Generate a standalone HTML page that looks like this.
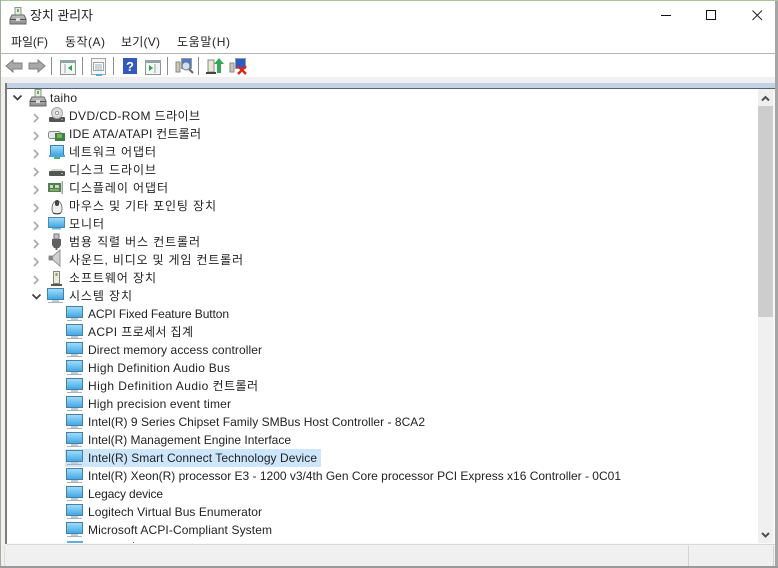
<!DOCTYPE html>
<html><head><meta charset="utf-8"><style>
html,body{margin:0;padding:0;background:#fff;overflow:hidden}
svg{display:block;filter:blur(.25px)}
text{font-family:"Liberation Sans","Noto Sans CJK KR",sans-serif;font-size:12px;fill:#222}
</style></head><body>
<svg width="778" height="568" viewBox="0 0 778 568" xmlns="http://www.w3.org/2000/svg">
<defs>
<linearGradient id="scr" x1="0" y1="0" x2="0" y2="1"><stop offset="0" stop-color="#a2def8"/><stop offset="1" stop-color="#3fa6e6"/></linearGradient>
<linearGradient id="gr" x1="0" y1="0" x2="0" y2="1"><stop offset="0" stop-color="#c4c4c4"/><stop offset="1" stop-color="#8c8c8c"/></linearGradient>
<symbol id="mon" overflow="visible">
<rect x="0.5" y="0.5" width="16" height="11" fill="url(#scr)" stroke="#4a7fa5"/>
<rect x="5" y="12" width="7" height="2" fill="#c2ccd4"/>
<rect x="1" y="14" width="15" height="1" fill="#a6b3bd"/>
</symbol>
<symbol id="pc" overflow="visible">
<rect x="6" y="0.5" width="6" height="8" fill="#e6ecdf" stroke="#8a9985"/><rect x="8" y="2" width="2" height="3" fill="#6fae62"/>
<path d="M3 8h12l2 4v5H1v-5z" fill="url(#gr)" stroke="#666"/><rect x="1" y="12" width="16" height="1" fill="#555"/><rect x="7" y="11" width="4" height="3" fill="#ddd"/>
</symbol>
</defs>

<!-- window frame -->
<rect width="778" height="568" fill="#f0f0f0"/>
<rect x="0" y="0" width="778" height="1" fill="#a9c49a"/>
<rect x="1" y="1" width="776" height="52" fill="#fff"/>
<rect x="1" y="53" width="776" height="1" fill="#b4b4b4"/>
<rect x="1" y="54" width="776" height="23" fill="#fff"/>
<rect x="1" y="77" width="776" height="6" fill="#f0f0f0"/>
<rect x="6" y="83" width="769" height="5" fill="#c0d2e4"/>
<rect x="6" y="88" width="769" height="1" fill="#5c6066"/>
<rect x="0" y="0" width="1" height="568" fill="#a3ab9a"/>
<rect x="775" y="1" width="3" height="567" fill="#a6a6a6"/>
<rect x="0" y="566" width="778" height="2" fill="#9a9a9a"/>

<!-- tree pane -->
<rect x="5" y="83" width="2" height="461" fill="#7d7d7d"/>
<rect x="7" y="89" width="751" height="454" fill="#fff"/>
<rect x="7" y="543" width="768" height="1" fill="#fafafa"/>
<rect x="7" y="544" width="768" height="1" fill="#d8d8d8"/>

<!-- scrollbar -->
<rect x="758" y="89" width="15" height="454" fill="#f0f0f0"/>
<rect x="773" y="89" width="2" height="454" fill="#f8f8f8"/>
<rect x="758" y="106" width="15" height="211" fill="#cdcdcd"/>
<path d="M762 100.5l3.5-3.5 3.5 3.5" fill="none" stroke="#505050" stroke-width="2"/>
<path d="M762 533l3.5 3.5 3.5-3.5" fill="none" stroke="#505050" stroke-width="2"/>

<!-- status bar -->
<rect x="688" y="546" width="1" height="20" fill="#d4d4d4"/>
<rect x="773" y="546" width="1" height="20" fill="#d4d4d4"/>
<rect x="4" y="546" width="1" height="20" fill="#dcdcdc"/>

<!-- title bar -->
<use href="#pc" x="9" y="7"/>
<text x="30" y="20" textLength="63" lengthAdjust="spacing" style="font-size:13px">장치 관리자</text>
<rect x="661" y="15" width="10" height="1" fill="#111"/>
<rect x="706.5" y="10.5" width="9" height="9" fill="none" stroke="#111"/>
<path d="M752.5 10.5l9.5 9.5M762 10.5l-9.5 9.5" stroke="#222" fill="none"/>

<!-- menu -->
<text x="11" y="46" textLength="37" lengthAdjust="spacing">파일(F)</text>
<text x="65" y="46" textLength="40" lengthAdjust="spacing">동작(A)</text>
<text x="121" y="46" textLength="39" lengthAdjust="spacing">보기(V)</text>
<text x="177" y="46" textLength="53" lengthAdjust="spacing">도움말(H)</text>

<!-- toolbar -->
<g stroke="#8c8c8c" fill="none">
<path d="M51.5 57v18M82.5 57v18M113.5 57v18M167.5 57v18M198.5 57v18"/>
</g>
<path d="M6 66l7-6v3h9v6h-9v3z" fill="#a8a8a8" stroke="#808080"/>
<path d="M45 66l-7-6v3h-9v6h9v3z" fill="#a8a8a8" stroke="#808080"/>
<g>
<rect x="60.5" y="60.5" width="15" height="14" fill="#f4f4f4" stroke="#8a9696"/><rect x="60" y="60" width="16" height="3" fill="#93a2a2"/>
<path d="M65 64v9" stroke="#9aa"/><path d="M72 65l-4 3 4 3z" fill="#2ca44a"/>
<rect x="91.5" y="58.5" width="14" height="16" fill="#f6f6f6" stroke="#a4a4a4"/><rect x="93.5" y="62.5" width="10" height="8" fill="#fff" stroke="#9aa6ac"/><path d="M95 65h7M95 67h7M95 69h7" stroke="#9aaab8"/><rect x="96" y="74" width="6" height="2" fill="#4ab0d8"/>
<rect x="123" y="58" width="14" height="16" fill="#3458bc"/><text x="126" y="71" style="font-size:13px;font-weight:bold;fill:#fff">?</text>
<rect x="145.5" y="60.5" width="15" height="14" fill="#f4f4f4" stroke="#8a9696"/><rect x="145" y="60" width="16" height="3" fill="#93a2a2"/>
<path d="M155 64v9" stroke="#9aa"/><path d="M149 65l4 3-4 3z" fill="#2ca44a"/>
<rect x="176" y="62" width="4" height="10" fill="#c8c8b8" stroke="#888"/><rect x="181.5" y="58.5" width="10" height="10" fill="#4a7cc8" stroke="#999"/><circle cx="186" cy="66" r="4" fill="#cfe2f4" stroke="#778"/><path d="M189 69l4 4" stroke="#666" stroke-width="2"/>
<rect x="208" y="60" width="6" height="12" fill="#e8e8d8" stroke="#888"/><rect x="206" y="72" width="10" height="2" fill="#444"/><path d="M219 58l5 6h-3v9h-4v-9h-3z" fill="#35a858"/>
<rect x="230" y="63" width="4" height="9" fill="#c8c8b8" stroke="#888"/><rect x="235.5" y="58.5" width="10" height="10" fill="#2a5cc8" stroke="#999"/><path d="M238 66l8 8M246 66l-8 8" stroke="#d8281c" stroke-width="2.4"/>
</g>

<!-- selection -->
<rect x="65" y="449" width="256" height="18" fill="#cde6fb"/>

<!-- chevrons -->
<g fill="none" stroke="#a8a8a8" stroke-width="1.6">
<path d="M34 114l4 4-4 4M34 132l4 4-4 4M34 150l4 4-4 4M34 168l4 4-4 4M34 186l4 4-4 4M34 204l4 4-4 4M34 222l4 4-4 4M34 240l4 4-4 4M34 258l4 4-4 4M34 276l4 4-4 4"/>
</g>
<g fill="none" stroke="#404040" stroke-width="1.7">
<path d="M13.5 95.5l4 4 4-4M32.5 294.5l4 4 4-4"/>
</g>

<!-- category icons -->
<use href="#pc" x="29" y="89"/>
<!-- DVD -->
<rect x="49" y="117" width="16" height="5" rx="1" fill="#555"/><circle cx="57" cy="113" r="5.5" fill="#dcdcdc" stroke="#a4a4a4"/><circle cx="57" cy="113" r="1.6" fill="#fff" stroke="#999"/><rect x="61" y="119" width="2" height="1" fill="#5c5"/>
<!-- IDE -->
<rect x="48.5" y="131.5" width="12" height="7" rx="2" fill="#e8e8e8" stroke="#888"/><rect x="55" y="133" width="10" height="8" fill="#3a8347"/><path d="M57 135h5M57 137h5" stroke="#c9d86a"/>
<!-- network -->
<rect x="50.5" y="145.5" width="13" height="10" fill="url(#scr)" stroke="#3a7eaa"/><rect x="49" y="155" width="16" height="2" fill="#4aa8dc"/><path d="M54 157h6v2h-6z" fill="#4cb468"/>
<!-- disk -->
<rect x="49" y="171" width="16" height="5" rx="1" fill="#555"/><path d="M51 171l1-2h10l1 2z" fill="#d4d4d4"/><rect x="61" y="173" width="2" height="1" fill="#6d6"/>
<!-- display adapter -->
<rect x="48" y="183" width="13" height="9" fill="#4a8456"/><path d="M50 185h3v3h-3zM55 185h4v3h-4z" fill="#cfd8b0"/><path d="M50 190h9" stroke="#d8c860"/><rect x="61.5" y="181" width="1.5" height="13" fill="#a4a4a4"/>
<!-- mouse -->
<path d="M52 209c0-5 2-8 5-8s5 3 5 8c0 3-1 5-5 5s-5-2-5-5z" fill="#eee" stroke="#777"/><rect x="55" y="200" width="4" height="6" rx="2" fill="#444"/><path d="M53 213c2 1 6 1 8 0" stroke="#444" fill="none"/>
<!-- monitor -->
<rect x="48.5" y="217.5" width="16" height="10" fill="url(#scr)" stroke="#4a88ad"/><rect x="52" y="228" width="9" height="1.5" fill="#6ab6e4"/>
<!-- usb -->
<rect x="54" y="234" width="5" height="5" fill="#c2c2c2" stroke="#777"/><path d="M52 239h9v6l-2 3h-5l-2-3z" fill="#606060"/><rect x="55.5" y="248" width="2" height="2" fill="#606060"/>
<!-- sound -->
<path d="M49 256h4l7-6v16l-7-6h-4z" fill="#cfcfcf" stroke="#969696"/><rect x="49" y="256" width="4" height="4" fill="#858585"/>
<!-- software -->
<rect x="53.5" y="271.5" width="6" height="12" fill="#eceadc" stroke="#87877a"/><rect x="55.5" y="273" width="2" height="3" fill="#76a86c"/><rect x="51" y="284" width="11" height="2" fill="#555"/>
<!-- system -->
<use href="#mon" x="47" y="288"/>

<!-- device icons -->
<use href="#mon" x="66" y="306"/><use href="#mon" x="66" y="324"/><use href="#mon" x="66" y="342"/><use href="#mon" x="66" y="360"/><use href="#mon" x="66" y="378"/><use href="#mon" x="66" y="396"/><use href="#mon" x="66" y="414"/><use href="#mon" x="66" y="432"/><use href="#mon" x="66" y="450"/><use href="#mon" x="66" y="468"/><use href="#mon" x="66" y="486"/><use href="#mon" x="66" y="504"/><use href="#mon" x="66" y="522"/>
<rect x="67" y="541" width="16" height="2" fill="#5cb0e0"/>
<rect x="133" y="542" width="1" height="1" fill="#555"/>

<!-- tree text -->
<text x="50" y="102" textLength="27" lengthAdjust="spacing">taiho</text>
<text x="69" y="120" textLength="131" lengthAdjust="spacing">DVD/CD-ROM 드라이브</text>
<text x="69" y="138" textLength="132" lengthAdjust="spacing">IDE ATA/ATAPI 컨트롤러</text>
<text x="69" y="156" textLength="87" lengthAdjust="spacing">네트워크 어댑터</text>
<text x="69" y="174" textLength="87" lengthAdjust="spacing">디스크 드라이브</text>
<text x="69" y="192" textLength="99" lengthAdjust="spacing">디스플레이 어댑터</text>
<text x="69" y="210" textLength="147" lengthAdjust="spacing">마우스 및 기타 포인팅 장치</text>
<text x="69" y="228" textLength="35" lengthAdjust="spacing">모니터</text>
<text x="69" y="246" textLength="131" lengthAdjust="spacing">범용 직렬 버스 컨트롤러</text>
<text x="69" y="264" textLength="174" lengthAdjust="spacing">사운드, 비디오 및 게임 컨트롤러</text>
<text x="69" y="282" textLength="87" lengthAdjust="spacing">소프트웨어 장치</text>
<text x="69" y="300" textLength="63" lengthAdjust="spacing">시스템 장치</text>
<text x="88" y="318" textLength="141" lengthAdjust="spacing">ACPI Fixed Feature Button</text>
<text x="88" y="336" textLength="105" lengthAdjust="spacing">ACPI 프로세서 집계</text>
<text x="88" y="354" textLength="174" lengthAdjust="spacing">Direct memory access controller</text>
<text x="88" y="372" textLength="142" lengthAdjust="spacing">High Definition Audio Bus</text>
<text x="88" y="390" textLength="170" lengthAdjust="spacing">High Definition Audio 컨트롤러</text>
<text x="88" y="408" textLength="143" lengthAdjust="spacing">High precision event timer</text>
<text x="88" y="426" textLength="337" lengthAdjust="spacing">Intel(R) 9 Series Chipset Family SMBus Host Controller - 8CA2</text>
<text x="88" y="444" textLength="203" lengthAdjust="spacing">Intel(R) Management Engine Interface</text>
<text x="88" y="462" textLength="229" lengthAdjust="spacing">Intel(R) Smart Connect Technology Device</text>
<text x="88" y="480" textLength="533" lengthAdjust="spacing">Intel(R) Xeon(R) processor E3 - 1200 v3/4th Gen Core processor PCI Express x16 Controller - 0C01</text>
<text x="88" y="498" textLength="75" lengthAdjust="spacing">Legacy device</text>
<text x="88" y="516" textLength="174" lengthAdjust="spacing">Logitech Virtual Bus Enumerator</text>
<text x="88" y="534" textLength="184" lengthAdjust="spacing">Microsoft ACPI-Compliant System</text>
</svg>
</body></html>
